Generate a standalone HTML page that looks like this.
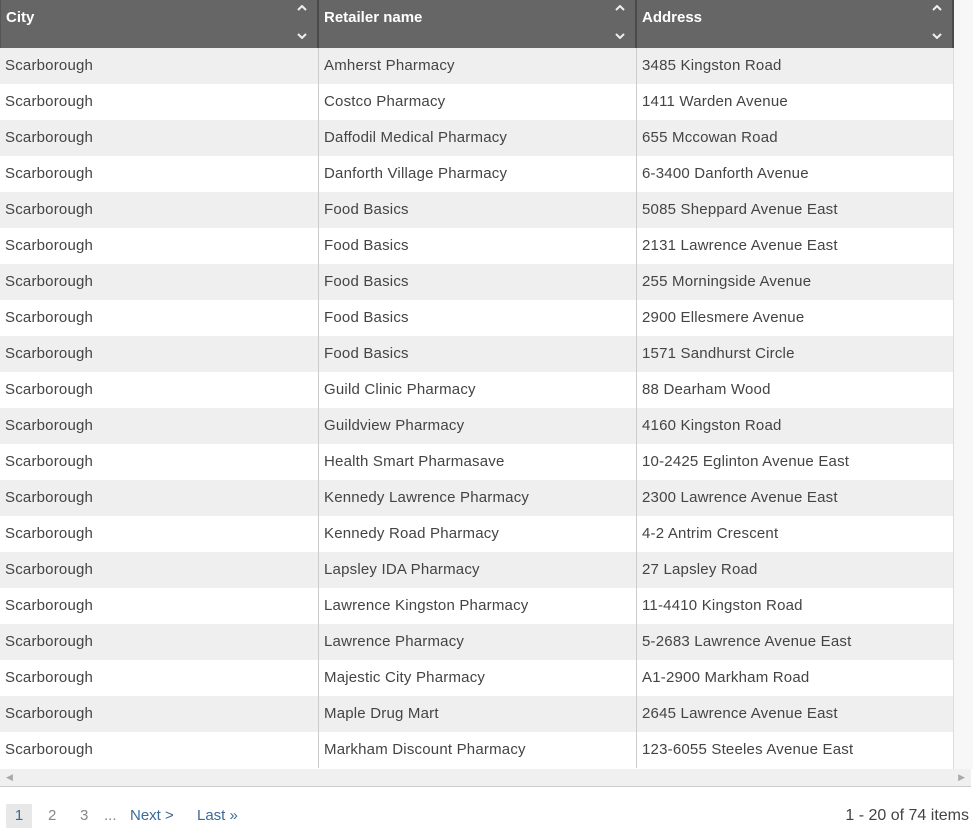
<!DOCTYPE html><html><head><style>
body{margin:0;width:973px;height:827px;background:#fff;font-family:"Liberation Sans",sans-serif;overflow:hidden;position:relative}
.hdr{position:absolute;top:0;left:0;width:953px;height:48px;background:#666;border-left:1px solid #555}
.hc{position:absolute;top:0;height:48px;color:#fff;font-weight:bold;font-size:15px;line-height:36px;padding-left:5px;box-sizing:border-box;border-right:2px solid #4a4a4a}
.ar{position:absolute;right:10px}
.rows{position:absolute;top:48px;left:0;width:953px}
.r{height:36px;position:relative;font-size:15px;color:#444;line-height:36px;letter-spacing:0.2px}
.r:nth-child(odd){background:#efefef}
.c{position:absolute;top:0;height:36px;padding-left:5px;box-sizing:border-box}
.c2,.c3{border-left:1px solid #ccc}
.sb{position:absolute;top:769px;left:0;width:971px;height:17px;background:#f0f0f0;border-bottom:1px solid #ccc;font-size:9px;color:#aaa;line-height:17px}
.pg{position:absolute;top:804px;left:6px;font-size:15px;color:#888;line-height:24px}
.pg span{position:absolute;top:0;white-space:nowrap}
</style></head><body>
<div style="position:absolute;left:953px;top:0;width:20px;height:769px;background:#f7f7f7;border-left:1px solid #ddd"></div>
<div class="hdr">
<div class="hc" style="left:0;width:318px">City<svg class="ar" style="top:5px" width="10" height="6"><path d="M1 5L5 1L9 5" stroke="#eee" stroke-width="2" fill="none"/></svg><svg class="ar" style="top:33px" width="10" height="6"><path d="M1 1L5 5L9 1" stroke="#eee" stroke-width="2" fill="none"/></svg></div>
<div class="hc" style="left:318px;width:318px">Retailer name<svg class="ar" style="top:5px" width="10" height="6"><path d="M1 5L5 1L9 5" stroke="#eee" stroke-width="2" fill="none"/></svg><svg class="ar" style="top:33px" width="10" height="6"><path d="M1 1L5 5L9 1" stroke="#eee" stroke-width="2" fill="none"/></svg></div>
<div class="hc" style="left:636px;width:317px">Address<svg class="ar" style="top:5px" width="10" height="6"><path d="M1 5L5 1L9 5" stroke="#eee" stroke-width="2" fill="none"/></svg><svg class="ar" style="top:33px" width="10" height="6"><path d="M1 1L5 5L9 1" stroke="#eee" stroke-width="2" fill="none"/></svg></div>
</div>
<div class="rows">
<div class="r"><div class="c" style="left:0">Scarborough</div><div class="c c2" style="left:318px">Amherst Pharmacy</div><div class="c c3" style="left:636px">3485 Kingston Road</div></div>
<div class="r"><div class="c" style="left:0">Scarborough</div><div class="c c2" style="left:318px">Costco Pharmacy</div><div class="c c3" style="left:636px">1411 Warden Avenue</div></div>
<div class="r"><div class="c" style="left:0">Scarborough</div><div class="c c2" style="left:318px">Daffodil Medical Pharmacy</div><div class="c c3" style="left:636px">655 Mccowan Road</div></div>
<div class="r"><div class="c" style="left:0">Scarborough</div><div class="c c2" style="left:318px">Danforth Village Pharmacy</div><div class="c c3" style="left:636px">6-3400 Danforth Avenue</div></div>
<div class="r"><div class="c" style="left:0">Scarborough</div><div class="c c2" style="left:318px">Food Basics</div><div class="c c3" style="left:636px">5085 Sheppard Avenue East</div></div>
<div class="r"><div class="c" style="left:0">Scarborough</div><div class="c c2" style="left:318px">Food Basics</div><div class="c c3" style="left:636px">2131 Lawrence Avenue East</div></div>
<div class="r"><div class="c" style="left:0">Scarborough</div><div class="c c2" style="left:318px">Food Basics</div><div class="c c3" style="left:636px">255 Morningside Avenue</div></div>
<div class="r"><div class="c" style="left:0">Scarborough</div><div class="c c2" style="left:318px">Food Basics</div><div class="c c3" style="left:636px">2900 Ellesmere Avenue</div></div>
<div class="r"><div class="c" style="left:0">Scarborough</div><div class="c c2" style="left:318px">Food Basics</div><div class="c c3" style="left:636px">1571 Sandhurst Circle</div></div>
<div class="r"><div class="c" style="left:0">Scarborough</div><div class="c c2" style="left:318px">Guild Clinic Pharmacy</div><div class="c c3" style="left:636px">88 Dearham Wood</div></div>
<div class="r"><div class="c" style="left:0">Scarborough</div><div class="c c2" style="left:318px">Guildview Pharmacy</div><div class="c c3" style="left:636px">4160 Kingston Road</div></div>
<div class="r"><div class="c" style="left:0">Scarborough</div><div class="c c2" style="left:318px">Health Smart Pharmasave</div><div class="c c3" style="left:636px">10-2425 Eglinton Avenue East</div></div>
<div class="r"><div class="c" style="left:0">Scarborough</div><div class="c c2" style="left:318px">Kennedy Lawrence Pharmacy</div><div class="c c3" style="left:636px">2300 Lawrence Avenue East</div></div>
<div class="r"><div class="c" style="left:0">Scarborough</div><div class="c c2" style="left:318px">Kennedy Road Pharmacy</div><div class="c c3" style="left:636px">4-2 Antrim Crescent</div></div>
<div class="r"><div class="c" style="left:0">Scarborough</div><div class="c c2" style="left:318px">Lapsley IDA Pharmacy</div><div class="c c3" style="left:636px">27 Lapsley Road</div></div>
<div class="r"><div class="c" style="left:0">Scarborough</div><div class="c c2" style="left:318px">Lawrence Kingston Pharmacy</div><div class="c c3" style="left:636px">11-4410 Kingston Road</div></div>
<div class="r"><div class="c" style="left:0">Scarborough</div><div class="c c2" style="left:318px">Lawrence Pharmacy</div><div class="c c3" style="left:636px">5-2683 Lawrence Avenue East</div></div>
<div class="r"><div class="c" style="left:0">Scarborough</div><div class="c c2" style="left:318px">Majestic City Pharmacy</div><div class="c c3" style="left:636px">A1-2900 Markham Road</div></div>
<div class="r"><div class="c" style="left:0">Scarborough</div><div class="c c2" style="left:318px">Maple Drug Mart</div><div class="c c3" style="left:636px">2645 Lawrence Avenue East</div></div>
<div class="r" style="background:#fff"><div class="c" style="left:0">Scarborough</div><div class="c c2" style="left:318px">Markham Discount Pharmacy</div><div class="c c3" style="left:636px">123-6055 Steeles Avenue East</div></div>
</div>
<div class="sb"><span style="position:absolute;left:6px">&#9664;</span><span style="position:absolute;right:6px">&#9654;</span></div>
<div class="pg">
<span style="left:0;width:26px;height:24px;background:#e8e8e8;color:#3a6a9a;text-align:center">1</span>
<span style="left:42px">2</span><span style="left:74px">3</span><span style="left:98px">...</span>
<span style="left:124px;color:#3a6a9a">Next &gt;</span><span style="left:191px;color:#3a6a9a">Last »</span>
</div>
<div style="position:absolute;top:804px;right:4px;font-size:16px;color:#444;line-height:24px">1 - 20 of 74 items</div>
</body></html>
